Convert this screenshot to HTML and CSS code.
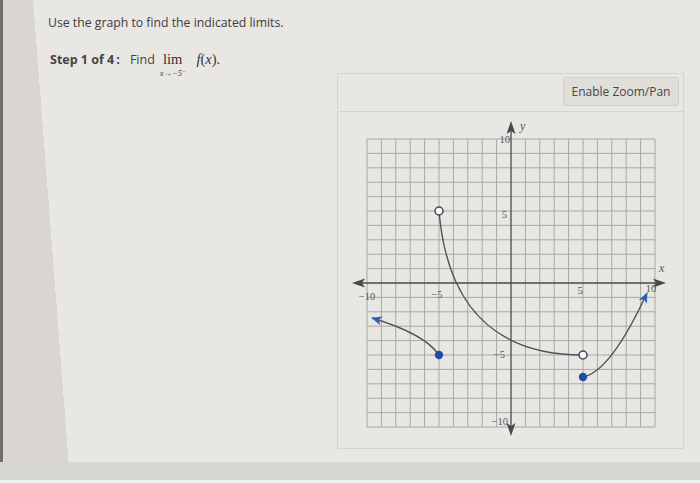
FILE: index.html
```html
<!DOCTYPE html>
<html lang="en">
<head>
<meta charset="utf-8">
<title>Limits from a graph</title>
<link rel="stylesheet" href="styles.css">
</head>
<body>
<div class="page">
  <div class="intro">
    <p class="prompt">Use the graph to find the indicated limits.</p>
    <div class="step">
      <span class="step-label">Step 1 of 4&thinsp;:</span>
      <span class="find">Find</span>
      <span class="lim">
        <span class="lim-word">lim</span>
        <span class="lim-sub">x→−5<sup>−</sup></span>
      </span>
      <span class="fx"><i>f</i>(<i>x</i>).</span>
    </div>
  </div>
  <div class="panel-row">
    <div class="panel">
      <div class="panel-head">
        <button class="zoom-btn" type="button">Enable Zoom/Pan</button>
      </div>
      <svg class="graph" width="330" height="330" viewBox="0 0 330 330" xmlns="http://www.w3.org/2000/svg">
        <defs>
          <marker id="blueArrow" viewBox="0 0 12 10" refX="11" refY="5" markerWidth="11" markerHeight="9" markerUnits="userSpaceOnUse" orient="auto-start-reverse">
            <path d="M0 0 L12 5 L0 10 L3 5 Z" fill="#2d5fb4"/>
          </marker>
        </defs>
        <path class="grid" d="M22 25V313M36.4 25V313M50.8 25V313M65.2 25V313M79.6 25V313M94 25V313M108.4 25V313M122.8 25V313M137.2 25V313M151.6 25V313M180.4 25V313M194.8 25V313M209.2 25V313M223.6 25V313M238 25V313M252.4 25V313M266.8 25V313M281.2 25V313M295.6 25V313M310 25V313M22 25H310M22 39.4H310M22 53.8H310M22 68.2H310M22 82.6H310M22 97H310M22 111.4H310M22 125.8H310M22 140.2H310M22 154.6H310M22 183.4H310M22 197.8H310M22 212.2H310M22 226.6H310M22 241H310M22 255.4H310M22 269.8H310M22 284.2H310M22 298.6H310M22 313H310"/>
        <path class="axis" d="M14 169H314M166 14V315"/>
        <path class="axis-head" d="M166 7L170.5 20L166 17L161.5 20ZM166 322L170.5 309L166 312L161.5 309ZM7 169L20 164.5L17 169L20 173.5ZM321 169L308 164.5L311 169L308 173.5Z"/>
        <text class="lbl it" x="175" y="16">y</text>
        <text class="lbl it" x="314" y="158">x</text>
        <text class="lbl" x="165" y="29" text-anchor="end">10</text>
        <text class="lbl" x="162" y="104" text-anchor="end">5</text>
        <text class="lbl" x="160" y="244" text-anchor="end">−5</text>
        <text class="lbl" x="163" y="311" text-anchor="end">−10</text>
        <text class="lbl" x="22" y="186" text-anchor="middle">−10</text>
        <text class="lbl" x="92" y="184" text-anchor="middle">−5</text>
        <text class="lbl" x="235" y="180" text-anchor="middle">5</text>
        <text class="lbl" x="306" y="178" text-anchor="middle">10</text>
        <path class="curve" d="M27 204Q80 220 94 241" marker-start="url(#blueArrow)"/>
        <path class="curve" d="M94 97C102 192 150 241 238 241"/>
        <path class="curve" d="M238 263C260 259 283 220 302 179" marker-end="url(#blueArrow)"/>
        <circle class="dot" cx="94" cy="241" r="4.2"/>
        <circle class="dot" cx="238" cy="263" r="4.2"/>
        <circle class="hole" cx="94" cy="97" r="4"/>
        <circle class="hole" cx="238" cy="241" r="4"/>
      </svg>
    </div>
  </div>
  <div class="bottom-band"></div>
</div>
</body>
</html>
```
FILE: styles.css
```css
html, body {
  margin: 0;
  padding: 0;
}
body {
  width: 700px;
  height: 483px;
  overflow: hidden;
  background: linear-gradient(85.6deg, #d9d6d1 0, #d9d6d1 70px, #e9e7e3 70px);
  box-shadow: inset 3px 0 0 #6f6d6a;
  font-family: "Open Sans", "Liberation Sans", sans-serif;
  color: #3a3a3a;
}
.page {
  height: 483px;
  display: flex;
  flex-direction: column;
}
.intro {
  padding: 14px 0 0 48px;
}
.prompt {
  margin: 0;
  font-size: 12.25px;
  line-height: 17px;
  color: #3c3c3c;
}
.step {
  display: flex;
  align-items: baseline;
  margin-top: 20px;
  font-size: 12.5px;
  color: #444;
}
.step-label {
  font-weight: 700;
  margin-left: 2px;
}
.find {
  margin-left: 10px;
}
.lim {
  display: inline-flex;
  flex-direction: column;
  align-items: center;
  margin-left: 5px;
  font-family: "Liberation Serif", "Times New Roman", serif;
}
.lim-word {
  font-size: 14.5px;
  line-height: 15px;
  color: #333;
}
.lim-sub {
  font-size: 8.5px;
  line-height: 8px;
  font-style: italic;
  color: #444;
}
.lim-sub sup {
  font-size: 6px;
  font-style: normal;
  vertical-align: 3px;
}
.fx {
  margin-left: 11px;
  font-family: "Liberation Serif", "Times New Roman", serif;
  font-size: 14.5px;
  color: #333;
}
.panel-row {
  display: flex;
  justify-content: flex-end;
  padding-right: 16px;
  margin-top: -4px;
}
.panel {
  width: 345px;
  height: 374px;
  border: 1px solid #d6d4cf;
  display: flex;
  flex-direction: column;
}
.panel-head {
  height: 38px;
  border-bottom: 1px solid #d6d4cf;
  display: flex;
  justify-content: flex-end;
  align-items: flex-start;
  padding: 3px 4px 0 0;
  box-sizing: border-box;
}
.zoom-btn {
  width: 116px;
  height: 29px;
  background: #e0ded9;
  border: 1px solid #d1cec8;
  border-radius: 3px;
  font-family: "Open Sans", "Liberation Sans", sans-serif;
  font-size: 12px;
  color: #474747;
  padding: 0;
}
.graph {
  display: block;
  margin: 2px 0 0 7px;
}
.grid {
  fill: none;
  stroke: #a9a7a3;
  stroke-width: 1;
}
.axis {
  fill: none;
  stroke: #4a4a4a;
  stroke-width: 1.3;
}
.axis-head {
  fill: #4a4a4a;
}
.lbl {
  font-family: "Liberation Serif", "Times New Roman", serif;
  font-size: 10.5px;
  fill: #555;
}
.it {
  font-style: italic;
  font-size: 12px;
}
.curve {
  fill: none;
  stroke: #4d525a;
  stroke-width: 1.4;
}
.dot {
  fill: #1f4fa0;
}
.hole {
  fill: #fbfbfb;
  stroke: #3d4857;
  stroke-width: 1.5;
}
.bottom-band {
  margin-top: auto;
  height: 18px;
  background: #d6d5d2;
  border-bottom: 3px solid #f2f2f2;
}
```
